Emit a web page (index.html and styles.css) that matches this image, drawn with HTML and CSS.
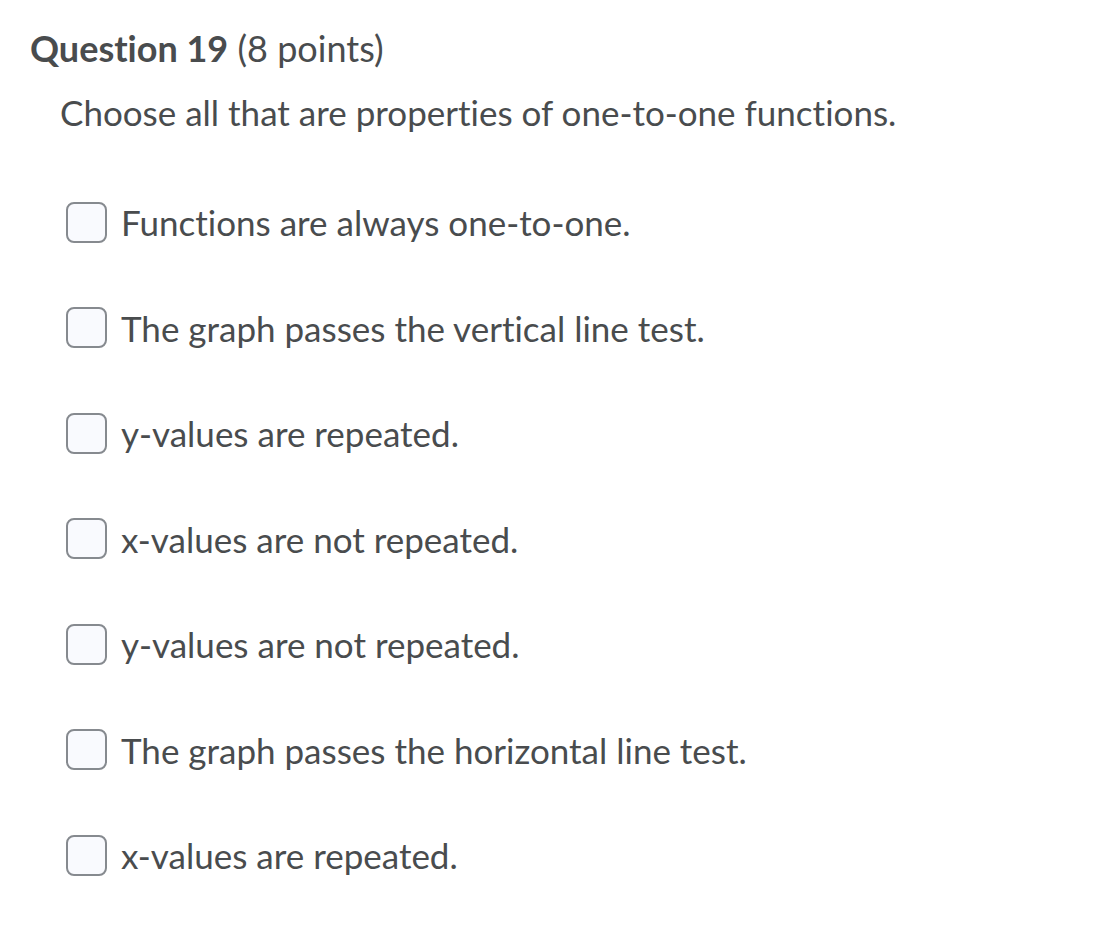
FILE: index.html
```html
<!DOCTYPE html>
<html>
<head>
<meta charset="utf-8">
<link rel="stylesheet" href="styles.css">
</head>
<body>
<div class="question">
  <h2 class="q-title"><strong>Question 19</strong> <span class="pts">(8 points)</span></h2>
  <p class="q-text">Choose all that are properties of one-to-one functions.</p>
  <ul class="options">
    <li class="opt"><span class="box"></span><span class="label">Functions are always one-to-one.</span></li>
    <li class="opt"><span class="box"></span><span class="label">The graph passes the vertical line test.</span></li>
    <li class="opt"><span class="box"></span><span class="label">y-values are repeated.</span></li>
    <li class="opt"><span class="box"></span><span class="label">x-values are not repeated.</span></li>
    <li class="opt"><span class="box"></span><span class="label">y-values are not repeated.</span></li>
    <li class="opt"><span class="box"></span><span class="label">The graph passes the horizontal line test.</span></li>
    <li class="opt"><span class="box"></span><span class="label">x-values are repeated.</span></li>
  </ul>
</div>
</body>
</html>
```
FILE: styles.css
```css
html, body {
  margin: 0;
  padding: 0;
  background: #ffffff;
}
body {
  font-family: Lato, "Open Sans", sans-serif;
  color: #494c4e;
  font-variant-ligatures: none;
}
.question {
  padding: 26px 0 0 30px;
}
.q-title {
  margin: 0;
  font-size: 36px;
  line-height: 44px;
  font-weight: 400;
}
.q-title strong {
  font-weight: 700;
}
.q-text {
  margin: 20px 0 0 30px;
  font-size: 35px;
  line-height: 44px;
}
.options {
  list-style: none;
  margin: 67px 0 0 36px;
  padding: 0;
  display: flex;
  flex-direction: column;
  gap: 63.5px;
}
.opt {
  display: flex;
  align-items: center;
  gap: 14px;
  height: 42px;
}
.box {
  width: 37px;
  height: 37px;
  border: 2px solid #868a8f;
  border-radius: 8px;
  background: #f9fafe;
  flex: none;
}
.label {
  font-size: 35px;
  line-height: 42px;
}
```
